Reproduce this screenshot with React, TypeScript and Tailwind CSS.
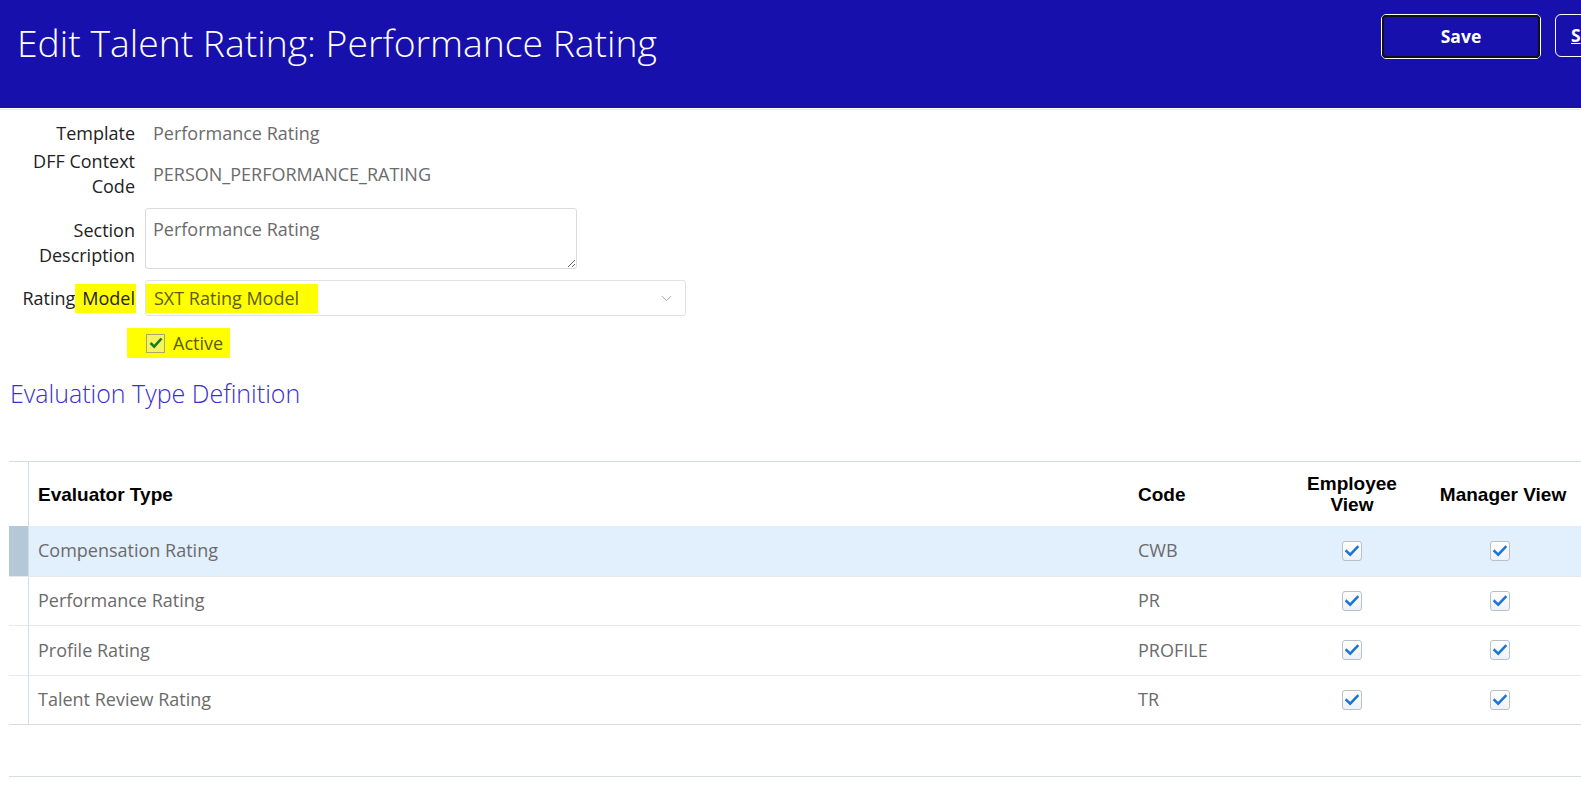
import { ChevronDown } from 'lucide-react'

const rows = [
  { name: 'Compensation Rating', code: 'CWB', selected: true },
  { name: 'Performance Rating', code: 'PR', selected: false },
  { name: 'Profile Rating', code: 'PROFILE', selected: false },
  { name: 'Talent Review Rating', code: 'TR', selected: false },
]

function BlueCheck() {
  return (
    <span className="inline-flex h-[20px] w-[20px] items-center justify-center rounded-[3px] border border-[#b9c0c7] bg-gradient-to-b from-white to-[#eef2f6]">
      <svg width="14" height="12" viewBox="0 0 14 12" fill="none">
        <path d="M1.5 6.2 L5.2 9.6 L12.5 2" stroke="#1b74d6" strokeWidth="2.6" strokeLinecap="square" />
      </svg>
    </span>
  )
}

export default function App() {
  return (
    <div className="min-h-[785px] overflow-hidden bg-white font-['Open_Sans',sans-serif] text-[#222]">
      {/* header bar */}
      <div className="flex h-[108px] items-start justify-between bg-[#1810ac] pl-[17px]">
        <h1 className="mt-[18px] text-[37.3px] font-light leading-[50px] text-white">
          Edit Talent Rating: Performance Rating
        </h1>
        <div className="-mr-[34px] mt-[14px] flex shrink-0 gap-[14px]">
          <button className="h-[45px] w-[160px] rounded-[5px] border border-white text-[17.5px] font-bold text-white">
            <span className="flex h-full w-full items-center justify-center rounded-[4px] border-2 border-[#111]">Save</span>
          </button>
          <button className="h-[43px] w-[60px] rounded-[6px] border border-white pl-[15px] text-left text-[17.5px] font-bold text-white underline">
            S
          </button>
        </div>
      </div>
      <div className="h-[2px] border-b border-[#e7e9eb]" />

      {/* form */}
      <div className="mt-[11px] grid grid-cols-[135px_1fr] gap-x-[10px] text-[18px] leading-[25px]">
        <div className="text-right">Template</div>
        <div className="pl-[8px] text-[#6b6b6b]">Performance Rating</div>

        <div className="mt-[3px] text-right">DFF Context<br />Code</div>
        <div className="mt-[3px] flex items-center pl-[8px] text-[#6b6b6b]">PERSON_PERFORMANCE_RATING</div>

        <div className="mt-[9px] pt-[10px] text-right">Section<br />Description</div>
        <div className="mt-[9px]">
          <textarea
            readOnly
            defaultValue="Performance Rating"
            className="block h-[61px] w-[432px] resize rounded-[3px] border border-[#d9dcdf] px-[7px] py-[8px] leading-[25px] text-[#6b6b6b] outline-none"
          />
        </div>

        <div className="mt-[11px] flex h-[36px] items-center justify-end">
          <span>Rating</span>
          <span className="-mr-[1px] flex h-[29px] items-center bg-[#ffff00] pl-[7px] pr-[1px]">Model</span>
        </div>
        <div className="mt-[11px]">
          <div className="flex h-[36px] w-[541px] items-center justify-between rounded-[3px] border border-[#dfe3e6]">
            <span className="flex h-[29px] items-center bg-[#ffff00] pl-[8px] pr-[19px] text-[#5c5c10]">SXT Rating Model</span>
            <ChevronDown size={17} strokeWidth={1.3} className="mr-[10px] text-[#9aa0a6]" />
          </div>
        </div>

        <div />
        <div className="mt-[12px] -ml-[18px]">
          <div className="inline-flex h-[30px] items-center bg-[#ffff00] pl-[19px] pr-[7px]">
            <span className="flex h-[19px] w-[19px] items-center justify-center border border-[#a8a870] bg-[#f4f460]">
              <svg width="14" height="12" viewBox="0 0 14 12" fill="none">
                <path d="M1.5 6 L5.2 9.6 L12.5 1.5" stroke="#1f7a1f" strokeWidth="2.6" />
              </svg>
            </span>
            <span className="ml-[8px] text-[#5c5c10]">Active</span>
          </div>
        </div>
      </div>

      <h2 className="ml-[10px] mt-[17px] text-[25px] font-light leading-[36px] text-[#3a2fcc]">
        Evaluation Type Definition
      </h2>

      {/* table */}
      <div className="ml-[9px] mt-[50px] border-y border-[#d4dde6]">
        <div className="grid h-[64px] grid-cols-[20px_1100px_161px_124px_172px_1fr] items-center font-['Liberation_Sans',Arial,sans-serif] text-[19px] font-bold leading-[21px] text-black">
          <div className="h-full border-r border-[#d4dde6]" />
          <div className="pl-[9px]">Evaluator Type</div>
          <div className="pl-[9px]">Code</div>
          <div className="text-center">Employee<br />View</div>
          <div className="pl-[6px] text-center">Manager View</div>
          <div />
        </div>
        {rows.map((r, i) => (
          <div
            key={r.code}
            className={`grid h-[49.5px] grid-cols-[20px_1100px_161px_124px_172px_1fr] items-center text-[18px] text-[#6b6b6b] ${i > 0 ? 'border-t border-[#e6eaee]' : ''} ${r.selected ? 'bg-[#e2effd]' : ''}`}
          >
            <div className={`h-full border-r border-[#d4dde6] ${r.selected ? 'bg-[#b5c8d8]' : 'bg-white'}`} />
            <div className="pl-[9px]">{r.name}</div>
            <div className="pl-[9px]">{r.code}</div>
            <div className="flex justify-center"><BlueCheck /></div>
            <div className="flex justify-center"><BlueCheck /></div>
            <div />
          </div>
        ))}
      </div>
      <div className="ml-[9px] mt-[51px] border-t border-[#d4dde6]" />
    </div>
  )
}
